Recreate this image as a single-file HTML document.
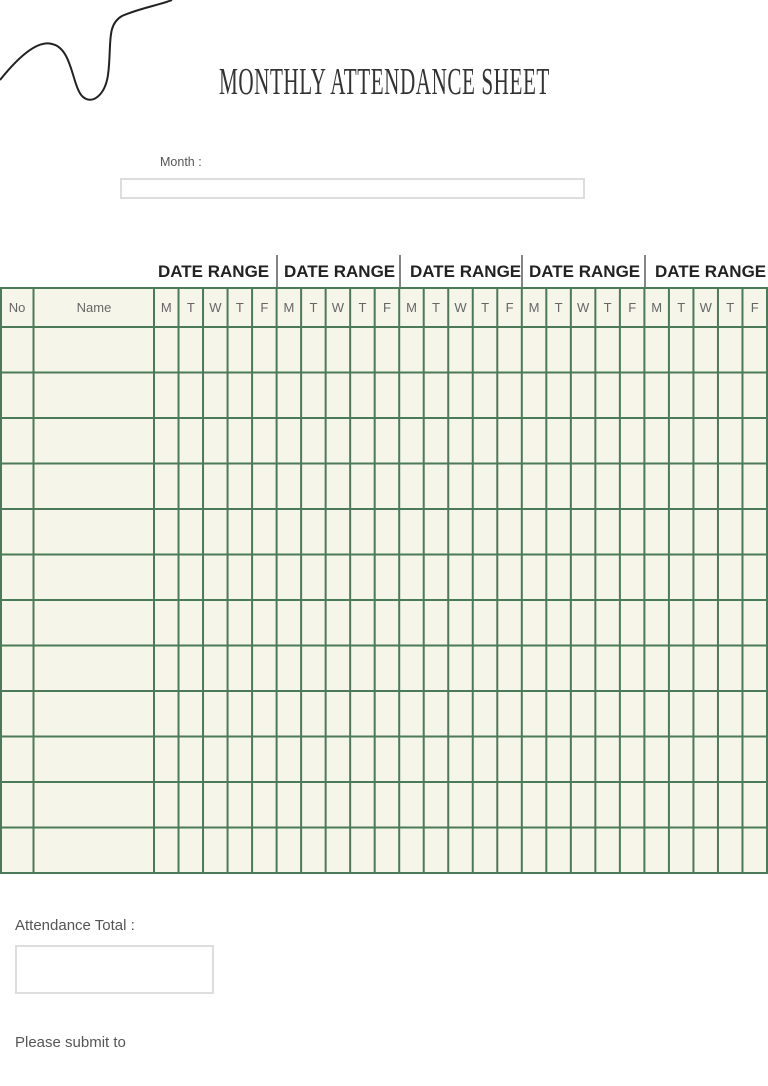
<!DOCTYPE html>
<html><head><meta charset="utf-8"><style>
body{margin:0;width:768px;height:1086px;background:#fff;position:relative;overflow:hidden;font-family:"Liberation Sans",sans-serif;}
.a{position:absolute;}
</style></head><body>
<svg class="a" style="left:0;top:0" width="200" height="120"><path d="M0 80 C20 55,38 40,52 44 C72 48,72 85,82 96 C92 106,105 95,108 75 C112 45,106 25,122 16 C140 8,160 5,172 0" fill="none" stroke="#222" stroke-width="2"/></svg>
<div class="a" style="left:219px;top:60px;width:330px;height:40px;overflow:visible;white-space:nowrap;"><span style="display:inline-block;font-family:'Liberation Serif',serif;font-size:38px;color:#333;transform:scaleX(0.556);transform-origin:0 0;letter-spacing:1px">MONTHLY ATTENDANCE SHEET</span></div>
<div class="a" style="left:160px;top:155px;font-size:12.5px;color:#555">Month :</div>
<div class="a" style="left:120px;top:178px;width:461px;height:17px;border:2px solid #ddd"></div>
<svg class="a" style="left:0;top:250px" width="768" height="630">
<rect x="0" y="38" width="768" height="585" fill="#f6f5ea"/>
<g stroke="#333" stroke-width="1.2"><line x1="277" y1="5" x2="277" y2="38"/><line x1="400" y1="5" x2="400" y2="38"/><line x1="522" y1="5" x2="522" y2="38"/><line x1="645" y1="5" x2="645" y2="38"/></g>
<g font-weight="bold" font-size="17" fill="#222" font-family="Liberation Sans"><text x="158" y="27">DATE RANGE</text><text x="284" y="27">DATE RANGE</text><text x="410" y="27">DATE RANGE</text><text x="529" y="27">DATE RANGE</text><text x="655" y="27">DATE RANGE</text></g>
<g stroke="#4a7a57" stroke-width="2" id="g"></g>
<g font-size="13" fill="#666" text-anchor="middle" id="t"><text x="17" y="62">No</text><text x="94" y="62">Name</text></g>
</svg>
<script>
var g=document.getElementById('g'),t=document.getElementById('t'),ns='http://www.w3.org/2000/svg';
function L(x1,y1,x2,y2){var l=document.createElementNS(ns,'line');l.setAttribute('x1',x1);l.setAttribute('y1',y1);l.setAttribute('x2',x2);l.setAttribute('y2',y2);g.appendChild(l);}
var ys=[38,77];for(var i=1;i<=12;i++)ys.push(77+i*45.5);
ys.forEach(function(y){L(0,y,768,y)});
var xs=[1,33.5];for(var i=0;i<=25;i++)xs.push(154+i*24.52);
xs.forEach(function(x){L(x,38,x,623)});
var d='MTWTF';for(var i=0;i<25;i++){var e=document.createElementNS(ns,'text');e.setAttribute('x',154+i*24.52+12.3);e.setAttribute('y',62);e.textContent=d[i%5];t.appendChild(e);}
</script>
<div class="a" style="left:15px;top:917px;font-size:15px;color:#555">Attendance Total :</div>
<div class="a" style="left:15px;top:945px;width:195px;height:45px;border:2px solid #ddd"></div>
<div class="a" style="left:15px;top:1034px;font-size:15px;color:#555">Please submit to</div>
</body></html>
